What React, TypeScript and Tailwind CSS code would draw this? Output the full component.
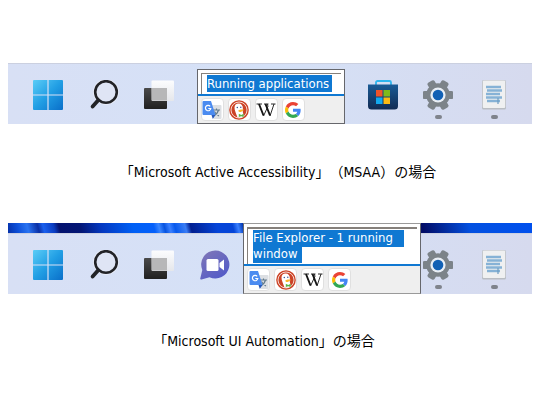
import type { ReactNode } from "react";

const WindowsIcon = () => (
  <svg viewBox="0 0 30 30" className="size-[30px]">
    <defs>
      <linearGradient id="win" x1="0" y1="0" x2="30" y2="30" gradientUnits="userSpaceOnUse">
        <stop offset="0" stopColor="#5bcdf7" />
        <stop offset="0.5" stopColor="#219ee4" />
        <stop offset="1" stopColor="#0a6fc9" />
      </linearGradient>
    </defs>
    <path
      d="M1 0h13.4v14.4H0V1a1 1 0 0 1 1-1zM15.6 0H29a1 1 0 0 1 1 1v13.4H15.6zM0 15.6h14.4V30H1a1 1 0 0 1-1-1zM15.6 15.6H30V29a1 1 0 0 1-1 1H15.6z"
      fill="url(#win)"
    />
  </svg>
);

const SearchIcon = () => (
  <svg viewBox="0 0 30 30" className="size-[30px]" fill="none" stroke="#222327" strokeLinecap="round">
    <circle cx="17" cy="12" r="10.8" stroke="#eef1fa" strokeWidth="4" />
    <circle cx="17" cy="12" r="10.8" fill="#dfe5f5" strokeWidth="2.6" />
    <path d="M9.2 20.2 3.6 26.6" strokeWidth="3.8" />
  </svg>
);

const TaskViewIcon = () => (
  <svg viewBox="0 0 30 30" className="size-[30px]">
    <defs>
      <linearGradient id="back" x1="0" y1="8" x2="0" y2="29" gradientUnits="userSpaceOnUse">
        <stop stopColor="#4a4a4a" />
        <stop offset="1" stopColor="#202020" />
      </linearGradient>
      <linearGradient id="front" x1="0" y1="0" x2="0" y2="21" gradientUnits="userSpaceOnUse">
        <stop stopColor="#ffffff" />
        <stop offset="1" stopColor="#e6e7ea" />
      </linearGradient>
    </defs>
    <rect y="8" width="23" height="21" rx="1" fill="url(#back)" />
    <rect x="7.5" y="0.5" width="22.5" height="20.5" rx="1" fill="url(#front)" opacity="0.94" />
    <path d="M8 8h15v12.5H8z" fill="#b7b7b8" />
  </svg>
);

const StoreIcon = () => (
  <svg viewBox="0 0 30 30" className="size-[30px]">
    <defs>
      <linearGradient id="bag" x1="0" y1="4" x2="0" y2="30" gradientUnits="userSpaceOnUse">
        <stop stopColor="#1a5c97" />
        <stop offset="1" stopColor="#112a52" />
      </linearGradient>
    </defs>
    <path d="M8 5V2.5A1.5 1.5 0 0 1 9.5 1h12A1.5 1.5 0 0 1 23 2.5V5" fill="none" stroke="#2fb5ee" strokeWidth="1.8" />
    <path d="M0 4.5h30V26a3.5 3.5 0 0 1-3.5 3.5h-23A3.5 3.5 0 0 1 0 26z" fill="url(#bag)" />
    <path d="M8 10h6.5v6.5H8z" fill="#f1532a" />
    <path d="M15.5 10H22v6.5h-6.5z" fill="#7fba1a" />
    <path d="M8 17.5h6.5V24H8z" fill="#13a8ee" />
    <path d="M15.5 17.5H22V24h-6.5z" fill="#fcba12" />
  </svg>
);

const SettingsIcon = () => (
  <svg viewBox="0 0 30 30" className="size-[30px]">
    <g fill="#7c8389">
      <circle cx="15" cy="15" r="11.8" />
      <rect x="11" y="-0.5" width="8" height="31" rx="2" transform="rotate(30 15 15)" />
      <rect x="11" y="-0.5" width="8" height="31" rx="2" transform="rotate(90 15 15)" />
      <rect x="11" y="-0.5" width="8" height="31" rx="2" transform="rotate(150 15 15)" />
    </g>
    <circle cx="15" cy="15" r="7.6" fill="#e9eef5" />
    <circle cx="15" cy="15" r="5.3" fill="#1260b4" />
  </svg>
);

const NotepadIcon = () => (
  <svg viewBox="0 0 30 30" className="size-[30px]">
    <rect x="3" y="0" width="24" height="29.5" rx="1.5" fill="#b9bdc3" />
    <rect x="3.8" y="0.5" width="22.4" height="27.5" rx="1" fill="#eff0f1" />
    <path d="M7 7h15M8 10.5h15M7 14h14M7 17.5h16M8 21h13" stroke="#86b2d6" strokeWidth="2.4" />
    <path d="M19 18v6" stroke="#6c9cc2" strokeWidth="1.2" />
  </svg>
);

const ChatIcon = () => (
  <svg viewBox="0 0 30 30" className="size-[30px]">
    <defs>
      <linearGradient id="chat" x1="4" y1="2" x2="24" y2="30" gradientUnits="userSpaceOnUse">
        <stop stopColor="#7d75b8" />
        <stop offset="1" stopColor="#5059c9" />
      </linearGradient>
    </defs>
    <path d="M15.5 0.5a14 14 0 1 1-6 26.7L1.5 29.5a1 1 0 0 1-1.2-1.2L2.3 20A14 14 0 0 1 15.5 0.5z" fill="url(#chat)" />
    <rect x="6.5" y="9" width="12" height="12" rx="1.5" fill="#fff" />
    <path d="M19.5 13 24 9.5v11L19.5 17z" fill="#fff" />
  </svg>
);

const TranslateIcon = () => (
  <svg viewBox="0 0 20 20" className="size-5">
    <path d="M8 5h10.5a1 1 0 0 1 1 1v12a1 1 0 0 1-1 1H12z" fill="#dcdfe3" />
    <path d="M11 10h7M14.5 8.5V10M16.5 10c-.6 2.5-2.5 4.5-4.5 5.5M12.5 11.5c.8 2 2.5 3.5 4.5 4.5" fill="none" stroke="#60798b" strokeWidth="1.1" />
    <path d="M1.5 1H9l4.5 14H1.5a1 1 0 0 1-1-1V2a1 1 0 0 1 1-1z" fill="#4b8bf0" />
    <path d="M9.5 15h4l-2.7 4z" fill="#2859ba" />
    <path d="M8.2 6.3A2.7 2.7 0 1 0 8.8 8.5H6.3" fill="none" stroke="#fff" strokeWidth="1.2" />
  </svg>
);

const DuckIcon = () => (
  <svg viewBox="0 0 20 20" className="size-5">
    <circle cx="10" cy="10" r="9.8" fill="#cc4326" />
    <circle cx="10" cy="10" r="8" fill="none" stroke="#fbe9e3" strokeWidth="0.9" />
    <path d="M8.5 17.6C7.5 14 5.3 10.5 5.500 7.500c.1-2.500 1.700-3.900 4-3.900 3 0 4.500 2 4.400 5.200 0 2-.4 3.200.3 4.700l.4 2.900c-1.700 1.200-4 1.600-6.100 1.200z" fill="#fff" />
    <circle cx="8.3" cy="7.5" r="0.7" fill="#2d4f8e" />
    <circle cx="11.8" cy="7.2" r="0.7" fill="#2d4f8e" />
    <path d="M9.3 10.5c1.5-1.2 4-1.2 5.7-.8-.8 1.2-2.300 1.400-3 2.300-1.200.4-2.600-.2-2.700-1.500z" fill="#fbb52b" />
    <path d="m9.800 13.800 2.500 1.200 2.300-1.200v3.200l-2.400-.8-2.400.9z" fill="#5ab545" />
  </svg>
);

// serif double-V mark
const WikipediaIcon = () => (
  <svg viewBox="0 0 20 20" className="size-5" fill="none" stroke="#151515">
    <path d="M0.5 4H6M8 4h4.5M15 4h4.5" strokeWidth="0.9" />
    <path d="m3 4 4.5 11.5M9.5 4 14 15.5" strokeWidth="1.9" />
    <path d="M7.5 16 12 6.2 11.2 4M14 16l4-12" strokeWidth="0.9" />
  </svg>
);

const GoogleIcon = () => (
  <svg viewBox="0 0 48 48" className="size-4">
    <path fill="#EA4335" d="M24 9.500c3.540 0 6.710 1.220 9.210 3.600l6.850-6.850C35.900 2.380 30.470 0 24 0 14.620 0 6.510 5.380 2.560 13.220l7.980 6.190C12.430 13.720 17.740 9.500 24 9.500z" />
    <path fill="#4285F4" d="M46.980 24.550c0-1.570-.15-3.090-.38-4.550H24v9.020h12.940c-.58 2.960-2.260 5.480-4.780 7.180l7.730 6c4.510-4.180 7.090-10.360 7.090-17.650z" />
    <path fill="#FBBC05" d="M10.530 28.590c-.48-1.450-.76-2.990-.76-4.590s.27-3.140.76-4.590l-7.980-6.190C.92 16.460 0 20.120 0 24c0 3.880.92 7.540 2.560 10.780l7.970-6.190z" />
    <path fill="#34A853" d="M24 48c6.480 0 11.930-2.130 15.890-5.810l-7.730-6c-2.150 1.450-4.920 2.300-8.160 2.300-6.260 0-11.570-4.220-13.470-9.910l-7.980 6.190C6.510 42.620 14.620 48 24 48z" />
  </svg>
);

const engines = [
  { name: "Google Translate", icon: <TranslateIcon /> },
  { name: "DuckDuckGo", icon: <DuckIcon /> },
  { name: "Wikipedia", icon: <WikipediaIcon /> },
  { name: "Google", icon: <GoogleIcon /> },
];

const TaskButton = ({ label, running, children }: { label: string; running?: boolean; children: ReactNode }) => (
  <button aria-label={label} className="flex h-full flex-col items-center pt-4">
    {children}
    {running && <span className="mt-[5px] h-1 w-[7px] rounded-full bg-[#7f838c]" />}
  </button>
);

const SearchButtons = () => (
  <div className="flex h-[29px] items-center gap-1 border-t-2 border-[#0f78d2] bg-[#efefef] px-[3px]">
    {engines.map((engine) => (
      <button
        key={engine.name}
        aria-label={engine.name}
        className="flex size-[23px] items-center justify-center rounded-sm border border-[#e0e0e0] bg-white"
      >
        {engine.icon}
      </button>
    ))}
  </div>
);

const Taskbar = ({ children }: { children: ReactNode }) => (
  <div className="grid h-[61px] grid-cols-9 border-t border-[#cbd0e0] bg-linear-to-r from-[#d8e0f5] via-[#d5e1f7] to-[#d6daee] pr-2.5 pl-3">
    {children}
  </div>
);

const App = () => {
  return (
    <main className="min-h-screen bg-white px-2 pt-[63px] font-['DejaVu_Sans_Condensed','Noto_Sans','Noto_Sans_CJK_JP',sans-serif] text-black">
      {/* MSAA */}
      <section>
        <Taskbar>
          <TaskButton label="Start"><WindowsIcon /></TaskButton>
          <TaskButton label="Search"><SearchIcon /></TaskButton>
          <TaskButton label="Task view"><TaskViewIcon /></TaskButton>
          <div className="col-span-3 w-[148px] self-end justify-self-center border border-[#66676c] bg-white">
            <div className="mx-[3px] mt-[3px] border-t border-l border-[#85807b] pt-px pb-0.5 pl-[5px]">
              <input
                aria-label="Search text"
                defaultValue="Running applications"
                className="block h-[17px] w-[125px] bg-[#0f78d2] text-[13px] leading-[17px] text-white outline-none"
              />
            </div>
            <SearchButtons />
          </div>
          <TaskButton label="Microsoft Store"><StoreIcon /></TaskButton>
          <TaskButton label="Settings" running><SettingsIcon /></TaskButton>
          <TaskButton label="Notepad" running><NotepadIcon /></TaskButton>
        </Taskbar>
        <p className="mt-[38px] pl-4 text-center text-[14px] leading-5 [text-spacing-trim:space-all]">
          「Microsoft Active Accessibility」（MSAA）の場合
        </p>
      </section>

      {/* UI Automation */}
      <section className="mt-[41px]">
        <div className="h-2.5 bg-[linear-gradient(75deg,#0530a8_0%,#0d4fd8_2%,#2a74f2_4%,#0a2fa5_6%,#1a60ee_7%,#0a3cc0_9%,#04126e_10%,#031675_14%,#0438c0_18%,#0060f5_24%,#0560fb_28%,#3a86ff_29%,#0753e0_30%,#3a80ff_31%,#0759ed_32%,#3a7df5_34%,#021f90_35%,#0545d8_40%,#0545d8_43%,#3a80ff_44%,#0438b0_45%,#020c66_79%,#0350e0_88%,#0050ee_100%)]" />
        <Taskbar>
          <TaskButton label="Start"><WindowsIcon /></TaskButton>
          <TaskButton label="Search"><SearchIcon /></TaskButton>
          <TaskButton label="Task view"><TaskViewIcon /></TaskButton>
          <TaskButton label="Chat"><ChatIcon /></TaskButton>
          <div className="z-10 col-span-3 -mt-[11px] w-[178px] self-end border border-x-[#66676c] border-y-[#9a9a9a] bg-white">
            <div className="mx-[3px] mt-[3px] border-t-2 border-l border-[#85807b] pt-px pb-px pl-[5px]">
              <textarea
                aria-label="Search text"
                rows={2}
                defaultValue={"File Explorer - 1 running\nwindow"}
                className="block h-[33px] w-full resize-none overflow-hidden bg-[linear-gradient(#0f78d2,#0f78d2),linear-gradient(#0f78d2,#0f78d2)] bg-[length:151px_17px,49px_16px] bg-[position:0_0,0_17px] bg-no-repeat text-[13px] leading-4 text-white outline-none"
              />
            </div>
            <SearchButtons />
          </div>
          <TaskButton label="Settings" running><SettingsIcon /></TaskButton>
          <TaskButton label="Notepad" running><NotepadIcon /></TaskButton>
        </Taskbar>
        <p className="mt-[37px] pr-3 text-center text-[14px] leading-5 [text-spacing-trim:space-all]">
          「Microsoft UI Automation」の場合
        </p>
      </section>
    </main>
  );
};

export default App;
